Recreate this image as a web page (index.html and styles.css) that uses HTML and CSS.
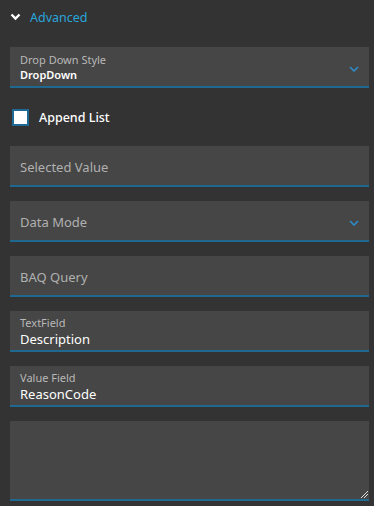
FILE: index.html
```html
<!DOCTYPE html>
<html>
<head>
  <meta charset="utf-8">
  <link rel="stylesheet" href="styles.css">
</head>
<body>
  <div class="section-header">
    <svg class="caret" width="11" height="8" viewBox="0 0 11 8"><path d="M1.5 1.5 L5.5 5.5 L9.5 1.5" fill="none" stroke="#fff" stroke-width="2.4"/></svg>
    <span class="section-title">Advanced</span>
  </div>

  <div class="fields">
    <div class="field field-select">
      <div class="field-label">Drop Down Style</div>
      <div class="field-value small">DropDown</div>
      <svg class="select-arrow" width="10" height="6" viewBox="0 0 10 6"><path d="M1 1 L5 5 L9 1" fill="none" stroke="#2b8fd0" stroke-width="1.5"/></svg>
    </div>

    <label class="checkbox-row">
      <span class="checkbox"></span>
      <span class="checkbox-label">Append List</span>
    </label>

    <div class="field field-empty">
      <div class="placeholder">Selected Value</div>
    </div>

    <div class="field field-empty field-select">
      <div class="placeholder">Data Mode</div>
      <svg class="select-arrow" width="10" height="6" viewBox="0 0 10 6"><path d="M1 1 L5 5 L9 1" fill="none" stroke="#2b8fd0" stroke-width="1.5"/></svg>
    </div>

    <div class="field field-empty">
      <div class="placeholder">BAQ Query</div>
    </div>

    <div class="field">
      <div class="field-label">TextField</div>
      <div class="field-value">Description</div>
    </div>

    <div class="field">
      <div class="field-label">Value Field</div>
      <div class="field-value">ReasonCode</div>
    </div>

    <div class="field textarea">
      <svg class="grip" width="10" height="10" viewBox="0 0 10 10"><path d="M9 2 L2 9 M9 5 L5 9" stroke="#ddd" stroke-width="1"/></svg>
    </div>
  </div>
</body>
</html>
```

FILE: styles.css
```css
body {
  margin: 0;
  padding: 0;
  width: 374px;
  height: 506px;
  overflow: hidden;
  background: #333333;
  font-family: "Noto Sans", "Open Sans", sans-serif;
  color: #fff;
}

.section-header {
  display: flex;
  align-items: center;
  height: 34px;
  padding-left: 10px;
}

.caret {
  margin-right: 9px;
}

.section-title {
  color: #2aa5dc;
  font-size: 12.5px;
}

.fields {
  display: flex;
  flex-direction: column;
  gap: 14px;
  padding: 13px 5px 0 10px;
}

.field {
  position: relative;
  height: 39px;
  box-sizing: content-box;
  background: #464646;
  border-bottom: 2px solid #1f6890;
  padding: 0 10px;
  display: flex;
  flex-direction: column;
  justify-content: center;
}

.field-label {
  font-size: 11px;
  color: #b8b8b8;
  line-height: 14px;
  padding-top: 3px;
}

.field-value {
  font-size: 13px;
  line-height: 18px;
  color: #fff;
}

.field-value.small {
  font-size: 11px;
  line-height: 16px;
  font-weight: 600;
}

.placeholder {
  font-size: 13px;
  color: #b0b0b0;
  padding-top: 3px;
}

.select-arrow {
  position: absolute;
  right: 10px;
  top: 19px;
}

.checkbox-row {
  display: flex;
  align-items: center;
  height: 20px;
  margin: 5px 0 5px 2px;
}

.checkbox {
  width: 13px;
  height: 13px;
  background: #fff;
  border: 2px solid #1f6a95;
  margin-right: 10px;
}

.checkbox-label {
  font-size: 12.5px;
  font-weight: 500;
}

.textarea {
  height: 78px;
}

.grip {
  position: absolute;
  right: 0;
  bottom: 0;
}
```
